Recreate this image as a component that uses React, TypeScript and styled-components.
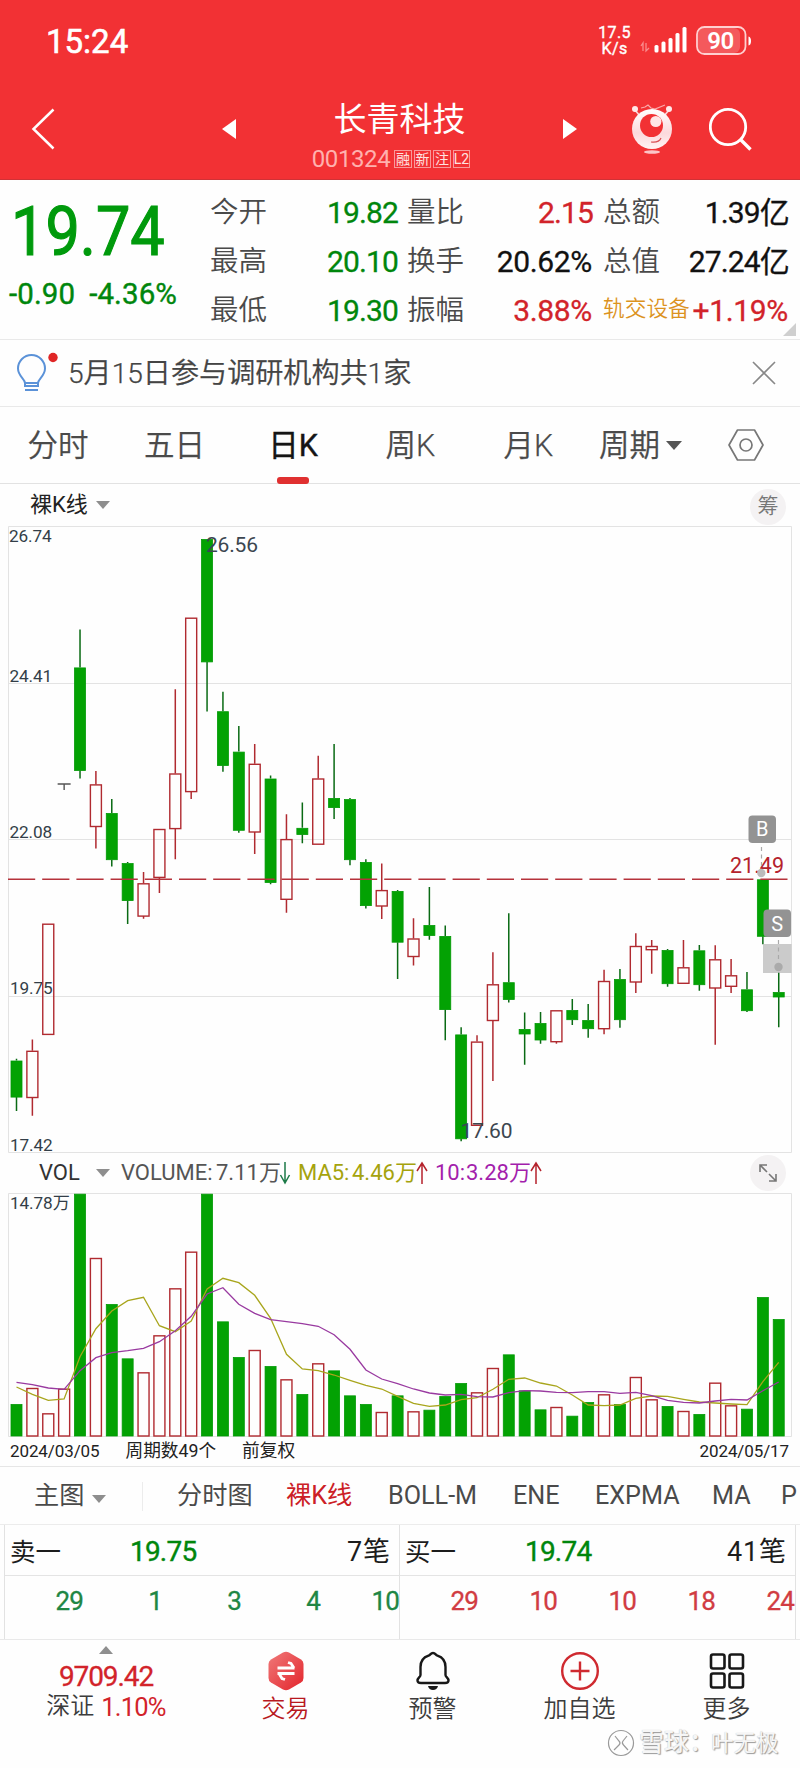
import React from "react";
import styled, { createGlobalStyle } from "styled-components";

const GREEN = "#00860c";
const BAR_GREEN = "#03a203";
const RED = "#d2232a";
const BAR_RED = "#b02a30";

const Global = createGlobalStyle`
  * { box-sizing: border-box; }
  body {
    margin: 0;
    background: #fdfdfd;
    font-family: Roboto, "Noto Sans CJK SC", sans-serif;
    line-height: 1.2;
    color: #444;
  }
  svg { display: block; }
`;

const Screen = styled.div`
  width: 800px;
  height: 1768px;
  overflow: hidden;
  background: #fefefe;
  display: flex;
  flex-direction: column;
`;

/* ---------- status bar and header ---------- */

const StatusBar = styled.div`
  height: 84px;
  padding: 0 48px 1px 46px;
  background: #f23134;
  color: #fff;
  display: flex;
  align-items: center;
  justify-content: space-between;
`;
const Clock = styled.span`
  font-size: 33px;
  -webkit-text-stroke: 0.6px currentColor;
`;
const StatusRight = styled.div`
  display: flex;
  align-items: center;
  padding-bottom: 2px;
`;
const NetSpeed = styled.div`
  font-size: 16px;
  letter-spacing: 0.4px;
  -webkit-text-stroke: 0.4px currentColor;
  text-align: center;
  margin: 0 9px 0 0;
`;
const NetLine = styled.div`
  height: 16px;
  line-height: 16px;
`;

const Header = styled.header`
  height: 96px;
  background: #f23134;
  border-bottom: 1px solid #cf3236;
  color: #fff;
  display: grid;
  grid-template-columns: 221px 16px 326px 16px 52px 42px 36px 44px 47px;
  align-items: start;
`;
const IconSlot = styled.div<{ $top: number; $left?: number }>`
  padding: ${(p) => p.$top}px 0 0 ${(p) => p.$left ?? 0}px;
`;
const TitleBlock = styled.div`
  display: flex;
  flex-direction: column;
  align-items: center;
  padding: 14px 1px 0 0;
`;
const StockName = styled.div`
  font-size: 33px;
  line-height: 44px;
  height: 44px;
`;
const CodeLine = styled.div`
  display: flex;
  align-items: center;
  gap: 2px;
  height: 34px;
  margin-left: -17px;
`;
const Code = styled.span`
  font-size: 24px;
  color: #ffb1ae;
  letter-spacing: -0.4px;
  margin-right: 2px;
`;
const Badge = styled.span`
  width: 17.5px;
  height: 18px;
  border: 1px solid #f9999a;
  font-size: 14px;
  line-height: 16px;
  display: flex;
  justify-content: center;
  color: #ffe3e1;
`;

/* ---------- quote ---------- */

const Quote = styled.section`
  height: 160px;
  border-bottom: 1px solid #e9e9e9;
  display: grid;
  grid-template-columns: 210px 187px 10px 185px 11px 185px 1fr;
  position: relative;
`;
const PriceBlock = styled.div`
  color: ${GREEN};
  white-space: nowrap;
`;
const Price = styled.div`
  width: max-content;
  margin-left: 11px;
  padding-top: 6px;
  font-size: 68px;
  line-height: 92px;
  height: 92px;
  color: #009a0c;
  -webkit-text-stroke: 1.2px currentColor;
  transform: scaleX(0.9);
  transform-origin: left;
`;
const Change = styled.div`
  display: flex;
  gap: 14px;
  padding-left: 9px;
  font-size: 29.5px;
  line-height: 45px;
  letter-spacing: 0.1px;
  -webkit-text-stroke: 0.4px currentColor;
`;
const Metrics = styled.div`
  display: flex;
  flex-direction: column;
  padding-top: 8px;
`;
const Metric = styled.div`
  height: 49px;
  display: flex;
  justify-content: space-between;
  align-items: center;
  white-space: nowrap;
`;
const Label = styled.span<{ $small?: boolean }>`
  font-size: ${(p) => (p.$small ? 21.7 : 28.5)}px;
  line-height: 36px;
  height: ${(p) => (p.$small ? 39 : 36)}px;
  color: ${(p) => (p.$small ? "#dc931f" : "#4a4a4a")};
  font-weight: 350;
`;
const Value = styled.span<{ $color: string; $wide: boolean }>`
  font-size: 30px;
  color: ${(p) => p.$color};
  letter-spacing: ${(p) => (p.$wide ? -0.35 : -0.85)}px;
  margin-right: ${(p) => (p.$wide ? 0 : -1)}px;
  -webkit-text-stroke: 0.3px currentColor;
`;
const Corner = styled.div`
  position: absolute;
  right: 4px;
  bottom: 3px;
  border-left: 13px solid transparent;
  border-bottom: 13px solid #cfcfcf;
`;

/* ---------- tip ---------- */

const Tip = styled.section`
  height: 67px;
  border-bottom: 1px solid #e9e9e9;
  padding: 0 24px 0 16px;
  display: flex;
  align-items: center;
`;
const TipText = styled.span`
  flex: 1;
  padding: 1px 0 0 9px;
  font-size: 28.1px;
  font-weight: 350;
  color: #444;
  -webkit-text-stroke: 0.25px currentColor;
`;

/* ---------- period tabs ---------- */

const Tabs = styled.nav`
  height: 77px;
  border-bottom: 1px solid #e2e2e2;
  display: grid;
  grid-template-columns: 116px 117px 120px 115px 121px 103px 108px;
  justify-items: center;
`;
const Tab = styled.div<{ $active?: boolean }>`
  font-size: 30.5px;
  line-height: 76px;
  height: 77px;
  color: ${(p) => (p.$active ? "#151515" : "#4a4a4a")};
  font-weight: ${(p) => (p.$active ? 400 : 350)};
  -webkit-text-stroke: ${(p) => (p.$active ? 0.4 : 0.25)}px currentColor;
  position: relative;
  display: flex;
  align-items: center;
  gap: 6px;
  &::after {
    content: "";
    display: ${(p) => (p.$active ? "block" : "none")};
    position: absolute;
    left: calc(50% - 16px);
    bottom: 0;
    width: 32px;
    height: 7px;
    border-radius: 3px;
    background: #e03030;
  }
`;

const Down = styled.i<{ $w: number; $c?: string; $drop?: number }>`
  display: block;
  margin-top: ${(p) => p.$drop ?? 0}px;
  border: ${(p) => p.$w / 2}px solid transparent;
  border-bottom: 0;
  border-top: ${(p) => p.$w / 2 + 1}px solid ${(p) => p.$c ?? "#8e8e8e"};
`;

/* ---------- charts ---------- */

const ChartHead = styled.div`
  height: 42px;
  padding: 3px 14px 0 30px;
  display: flex;
  align-items: center;
  justify-content: space-between;
`;
const ChartName = styled.div`
  display: flex;
  align-items: center;
  gap: 8px;
  font-size: 22px;
  color: #222;
  padding-bottom: 2px;
`;
const RoundButton = styled.div`
  width: 36px;
  height: 36px;
  border-radius: 50%;
  background: #f4f2f3;
  color: #777;
  font-size: 21px;
  font-weight: 350;
  display: flex;
  align-items: center;
  justify-content: center;
`;
const Plot = styled.svg`
  font-family: Roboto, "Noto Sans CJK SC", sans-serif;
  flex: none;
  overflow: visible;
`;
const VolHead = styled.div`
  height: 40px;
  padding: 0 14px 0 39px;
  display: flex;
  align-items: center;
  font-size: 22px;
  white-space: nowrap;
`;
const VolLabel = styled.span<{ $w: number; $color?: string }>`
  width: ${(p) => p.$w}px;
  color: ${(p) => p.$color ?? "inherit"};
  display: flex;
  align-items: center;
`;
const Spacer = styled.div`
  flex: 1;
`;
const Dates = styled.div`
  height: 30px;
  padding: 0 11px 0 10px;
  border-bottom: 1px solid #e6e6e6;
  display: flex;
  align-items: center;
  font-size: 17px;
  color: #222;
  gap: 26px;
`;
const DateText = styled.span`
  letter-spacing: -0.1px;
`;
const Note = styled.span`
  font-size: 17.7px;
`;

/* ---------- indicator tabs ---------- */

const Indicators = styled.nav`
  height: 58px;
  border-bottom: 1px solid #ececec;
  padding: 1px 0 0 34px;
  display: grid;
  grid-template-columns: 108px 35px 109px 102px 125px 82px 117px 69px 1fr;
  align-items: center;
  font-size: 25.2px;
  white-space: nowrap;
`;
const Indicator = styled.div<{ $active?: boolean }>`
  color: ${(p) => (p.$active ? "#cc2026" : "#4a4a4a")};
  display: flex;
  align-items: center;
  gap: 8px;
`;
const Divider = styled.div`
  width: 1px;
  height: 29px;
  background: #ececec;
`;

/* ---------- order queues ---------- */

const Orders = styled.section`
  height: 114px;
  margin: 0 4px;
  border-left: 1px solid #e2e2e2;
  display: grid;
  grid-template-columns: 395px 1fr;
`;
const Side = styled.div`
  border-right: 1px solid #e2e2e2;
`;
const Best = styled.div`
  height: 51px;
  border-bottom: 1px solid #e4e4e4;
  padding: 4px 9px 0 5px;
  display: grid;
  grid-template-columns: 120px 1fr auto;
  align-items: center;
  font-size: 25.5px;
  color: #1c1c1c;
`;
const BestPrice = styled.span`
  font-size: 28px;
  letter-spacing: -0.8px;
  color: ${GREEN};
  -webkit-text-stroke: 0.4px currentColor;
`;
const Count = styled.span`
  font-size: 27px;
  letter-spacing: 0.9px;
  margin-right: -1px;
`;
const Queue = styled.div<{ $color: string }>`
  display: grid;
  grid-template-columns: repeat(5, 79px);
  margin-left: -1px;
  text-align: right;
  font-size: 26px;
  line-height: 51px;
  letter-spacing: -0.9px;
  color: ${(p) => p.$color};
  -webkit-text-stroke: 0.3px currentColor;
`;

/* ---------- bottom navigation ---------- */

const Footer = styled.footer`
  height: 129px;
  border-top: 1px solid #e9e9e9;
`;
const Nav = styled.nav`
  height: 85px;
  display: grid;
  grid-template-columns: 212px 147px 147px 147px 147px;
`;
const NavItem = styled.div<{ $color?: string }>`
  display: flex;
  flex-direction: column;
  align-items: center;
  padding-top: 10px;
  font-size: 24px;
  line-height: 32px;
  gap: 1px;
  color: ${(p) => p.$color ?? "#3c3c3c"};
  font-weight: 350;
`;
const IndexItem = styled.div`
  display: flex;
  flex-direction: column;
  align-items: center;
  color: ${RED};
  padding-top: 6px;
`;
const IndexValue = styled.div`
  font-size: 28px;
  line-height: 32px;
  letter-spacing: -1.1px;
  margin-top: 7px;
  -webkit-text-stroke: 0.3px currentColor;
`;
const IndexChange = styled.div`
  font-size: 25.5px;
  line-height: 28px;
  display: flex;
  gap: 7px;
  letter-spacing: -0.8px;
`;
const IndexName = styled.span`
  font-size: 24px;
  color: #3c3c3c;
  font-weight: 350;
  line-height: 26px;
  letter-spacing: 0;
`;
const Up = styled.i`
  border: 7px solid transparent;
  border-top: 0;
  border-bottom: 8px solid #8f8f8f;
`;
const Watermark = styled.div`
  display: flex;
  align-items: center;
  padding: 2px 0 0 607px;
  height: 34px;
  font-size: 22.5px;
  color: #f6f6f6;
  white-space: nowrap;
  text-shadow: 1px 1px 1px #999, 0 0 1px #bbb;
`;
const Brand = styled.b`
  font-size: 25px;
  margin-left: 4px;
  font-weight: 500;
`;
const Author = styled.span`
  margin-left: -3px;
`;

/* ---------- data ---------- */

type Candle = [kind: string, high: number, top: number, bottom: number, low: number];

const candles: Candle[] = [
  ["g", 1058.8, 1060.5, 1097.1, 1111], ["r", 1039.5, 1050.8, 1097.5, 1115.7],
  ["r", 923.7, 923.7, 1034.4, 1034.4], ["t", 784, 784, 784, 789.9],
  ["g", 629.5, 667.4, 770.5, 778.5], ["r", 771, 784.4, 826.5, 848.4],
  ["g", 799.1, 813, 859.7, 866.5], ["g", 861.9, 863.1, 900.6, 924.1],
  ["r", 872, 883.3, 916.1, 918.7], ["r", 829, 829, 877.4, 893],
  ["r", 689.3, 773.5, 828.6, 859.3], ["r", 617.7, 617.7, 791.6, 799.1],
  ["g", 539, 539, 661.9, 711.6], ["g", 691.8, 711.2, 765.5, 771.8],
  ["g", 725.9, 751.6, 830.3, 832.8], ["r", 744, 763.8, 832, 853.9],
  ["g", 775.6, 778.5, 882.5, 884.2], ["r", 814.3, 839.1, 899.3, 912.8],
  ["g", 802.5, 827.8, 834.5, 843.3], ["r", 755.8, 778.5, 844.2, 844.2],
  ["g", 744, 797.9, 807.6, 818.9], ["g", 797.9, 799.1, 859.7, 865.2],
  ["g", 859.3, 861.9, 905.6, 908.6], ["r", 863.5, 890.1, 906, 919.1],
  ["g", 890.1, 890.9, 942.2, 978.9], ["r", 918.2, 938.5, 956.5, 965.4],
  ["g", 887.1, 925, 935.5, 939.7], ["g", 925.4, 935.9, 1009.6, 1040.3],
  ["g", 1027.3, 1034.4, 1138.8, 1141.3], ["r", 1035.3, 1041.6, 1125.3, 1125.3],
  ["r", 952.3, 984.3, 1020.5, 1081.1], ["g", 913.2, 982.2, 999.5, 1002.4],
  ["g", 1012.5, 1028.9, 1034, 1064.7], ["g", 1012, 1023, 1040, 1043.7],
  ["r", 1010.3, 1010.3, 1041.7, 1043.7], ["g", 999, 1010, 1019.7, 1025],
  ["g", 1004, 1020, 1028.7, 1037.7], ["r", 969.7, 981, 1028.7, 1034.3],
  ["g", 969, 979, 1019.7, 1027.7], ["r", 933.3, 946, 982, 993],
  ["r", 940, 946, 949.7, 973.7], ["g", 949, 950, 983.7, 986.7],
  ["r", 940, 967.3, 983.3, 983.3], ["g", 945, 950.3, 984.7, 990.7],
  ["r", 945.3, 959.3, 988, 1044.7], ["r", 959, 975.3, 986.3, 993],
  ["g", 972, 989.3, 1010.7, 1012], ["g", 879.3, 879.3, 936.3, 944.3],
  ["g", 972.3, 992, 997, 1027.3],
];

const volumes = [
  762, 714, 790, 716, 131, 324, 462, 625, 667, 556, 415, 305, 131, 514, 621, 600, 648, 688, 732, 640, 661, 736, 762,
  786, 736, 784, 779, 738, 699, 727, 654, 613, 721, 778, 771, 797, 756, 733, 762, 681, 748, 768, 783, 792, 698, 766,
  776, 441, 507,
];
const ma5 = [
  711, 733, 751, 747, 620, 536, 483, 452, 442, 527, 545, 513, 417, 385, 398, 436, 505, 613, 657, 662, 675, 691, 706,
  717, 739, 760, 769, 765, 749, 743, 718, 688, 684, 699, 708, 735, 765, 767, 765, 745, 738, 739, 748, 756, 759, 762,
  764, 695, 637,
];
const ma10 = [
  697, 704, 714, 718, 662, 623, 608, 602, 595, 575, 542, 499, 432, 413, 463, 490, 509, 515, 521, 529, 554, 598, 660,
  687, 701, 717, 729, 735, 733, 740, 741, 728, 722, 723, 727, 728, 725, 725, 730, 727, 737, 751, 757, 759, 753, 748,
  750, 722, 696,
];

const cx = (i: number) => 16.5 + 15.88 * i;
const line = (v: number[]) => v.map((y, i) => `${cx(i).toFixed(1)},${(y / 3 - 43).toFixed(1)}`).join(" ");

const metrics: [string, string, string][][] = [
  [["今开", "19.82", GREEN], ["最高", "20.10", GREEN], ["最低", "19.30", GREEN]],
  [["量比", "2.15", RED], ["换手", "20.62%", "#111"], ["振幅", "3.88%", RED]],
  [["总额", "1.39亿", "#111"], ["总值", "27.24亿", "#111"], ["轨交设备", "+1.19%", RED]],
];

/* ---------- drawings ---------- */

const PriceChart = () => (
  <Plot width="800" height="627" viewBox="0 526 800 627">
    <path
      d="M8.5 526.5H791.5V1152.5H8.5Z M8 683.5H791 M8 839.5H791 M8 996.5H791"
      stroke="#e3e3e3"
      fill="none"
    />
    <g fill="#333e48" fontSize="17.2" letterSpacing="-0.1">
      <text x="9" y="542">26.74</text>
      <text x="9.5" y="681.500">24.41</text>
      <text x="9.5" y="838">22.08</text>
      <text x="10" y="994">19.75</text>
      <text x="10" y="1150.5">17.42</text>
    </g>
    {candles.map(([kind, high, top, bottom, low], i) => {
      const x = cx(i);
      if (kind === "t")
        return <path key={i} d={`M${x - 6.5} ${top}H${x + 6.5}M${x} ${top}V${low}`} stroke="#555" strokeWidth="1.4" />;
      const up = kind === "r";
      return (
        <g key={i} stroke={up ? BAR_RED : "#0a6a14"} strokeWidth="1.5">
          <path d={`M${x} ${high}V${top}M${x} ${bottom}V${low}`} />
          <rect
            x={x - 5.5}
            y={top + 0.5}
            width={11}
            height={Math.max(bottom - top - 0.5, 2)}
            fill={up ? "none" : BAR_GREEN}
            stroke={up ? BAR_RED : "#029a06"}
            strokeWidth={up ? 1.4 : 0.8}
          />
        </g>
      );
    })}
    <path d="M8 879.3H787.5" stroke="#b5323b" strokeWidth="1.4" strokeDasharray="27.2 7" />
    <g fill="#3c4650" fontSize="21" letterSpacing="-0.2">
      <text x="206" y="552">26.56</text>
      <text x="460.500" y="1138">17.60</text>
    </g>
    <text x="730" y="873.3" fontSize="21.5" fill="#b5222c">21.49</text>
    <rect x="763" y="944" width="28.5" height="29" fill="#b9b9b9" opacity=".75" />
    <path d="M761.5 847V868M778.5 940V962" stroke="#a9a9a9" strokeWidth="1.2" strokeDasharray="4 3.5" />
    <circle cx="761.3" cy="873" r="4.2" fill="#bbb" />
    <circle cx="778.5" cy="967" r="4.2" fill="#aaa" />
    <g fill="#939393">
      <rect x="748.5" y="815.5" width="27.5" height="27.5" rx="4" />
      <rect x="763.5" y="909.5" width="27.5" height="27.5" rx="4" />
    </g>
    <g fill="#fff" fontSize="20" textAnchor="middle">
      <text x="762.3" y="836">B</text>
      <text x="777.2" y="930.5">S</text>
    </g>
  </Plot>
);

const VolumeChart = () => (
  <Plot width="800" height="244" viewBox="0 0 800 244">
    <path d="M8.5 .5H791.5V243.5H8.5Z" fill="none" stroke="#e3e3e3" />
    <text x="10" y="16" fontSize="17.2" fill="#333e48" letterSpacing="-0.1">14.78万</text>
    {volumes.map((v, i) => {
      const y = v / 3 - 43;
      const up = candles[i][0] !== "g";
      return (
        <rect
          key={i}
          x={cx(i) - 5.5}
          y={y + 0.5}
          width={11}
          height={242.5 - y}
          fill={up ? "none" : BAR_GREEN}
          stroke={up ? BAR_RED : "#029a06"}
          strokeWidth={up ? 1.4 : 0.8}
        />
      );
    })}
    <polyline points={line(ma5)} fill="none" stroke="#a8a51c" strokeWidth="1.3" />
    <polyline points={line(ma10)} fill="none" stroke="#993aa0" strokeWidth="1.3" />
  </Plot>
);

const Arrow = ({ down }: { down?: boolean }) => (
  <svg width="14" height="24" viewBox="0 0 14 24" fill="none" stroke={down ? "#1d7a48" : "#b5222c"} strokeWidth="1.5">
    {down ? <path d="M7 1V22M2.500 14L7 22L11.500 14" /> : <path d="M7 23V2M2 10L7 2L12 10" />}
  </svg>
);

const Signal = () => (
  <svg width="56" height="30" viewBox="0 0 56 30" fill="#fff">
    <path d="M3 25V17L1 20M6 17V25L9 22" fill="none" stroke="#f98b8c" strokeWidth="1.3" />
    <rect x="14.5" y="19" width="4" height="7.5" rx="1.5" />
    <rect x="21.5" y="15.5" width="4" height="11" rx="1.5" />
    <rect x="28.5" y="12" width="4" height="14.5" rx="1.5" />
    <rect x="35.5" y="7" width="4" height="19.5" rx="1.5" />
    <rect x="42.5" y="1" width="4" height="25.5" rx="1.5" />
  </svg>
);

const Battery = () => (
  <svg width="56" height="30" viewBox="0 0 56 30">
    <rect x="2" y="2" width="42" height="25" rx="6" fill="#f4595c" />
    <rect x="1" y="1" width="48.5" height="27" rx="7.5" fill="none" stroke="#ffd0d0" strokeWidth="1.8" />
    <path d="M52.5 10.5Q55 11 55 15T52.5 19.5Z" fill="#fff" />
    <text x="24.5" y="23" fontSize="24" fontWeight="600" fill="#fff" textAnchor="middle" letterSpacing="-0.5">90</text>
  </svg>
);

const Mascot = () => (
  <svg width="42" height="52" viewBox="0 0 42 52">
    <defs>
      <linearGradient id="face" x1="0" y1="0" x2="0" y2="1">
        <stop offset="0" stopColor="#fff" />
        <stop offset=".6" stopColor="#fcd9dc" />
        <stop offset="1" stopColor="#fff4f4" />
      </linearGradient>
    </defs>
    <path d="M4 7L9 13M38 7L33 13" stroke="#fbd0d2" strokeWidth="1.8" />
    <circle cx="4" cy="6" r="3" fill="#ffe9e9" />
    <circle cx="38" cy="6" r="3" fill="#ffe9e9" />
    <path d="M10 5L14 4L17 2L20 5L24 6L34 2" stroke="#fba9a9" strokeWidth="1.2" fill="none" />
    <circle cx="21" cy="26" r="20" fill="url(#face)" />
    <circle cx="20.5" cy="22.5" r="11.5" fill="#f23134" />
    <circle cx="24.8" cy="18.5" r="5.6" fill="#ffe6e6" />
    <path d="M20 39Q28 40 30 35" stroke="#d95055" strokeWidth="1.2" fill="none" />
    <ellipse cx="21" cy="49" rx="8" ry="1.8" fill="#fcc5c7" />
  </svg>
);

export default function App() {
  return (
    <Screen>
      <Global />
      <StatusBar>
        <Clock>15:24</Clock>
        <StatusRight>
          <NetSpeed>
            <NetLine>17.5</NetLine>
            <NetLine>K/s</NetLine>
          </NetSpeed>
          <Signal />
          <Battery />
        </StatusRight>
      </StatusBar>
      <Header>
        <IconSlot $top={24} $left={31}>
          <svg width="24" height="42" viewBox="0 0 24 42" fill="none" stroke="#fff" strokeWidth="2.5">
            <path d="M22.5 1.5L2.5 21L22.5 40.5" />
          </svg>
        </IconSlot>
        <IconSlot $top={34}>
          <svg width="16" height="22" fill="#fff"><path d="M1 11L15 1V21Z" /></svg>
        </IconSlot>
        <TitleBlock>
          <StockName>长青科技</StockName>
          <CodeLine>
            <Code>001324</Code>
            <Badge>融</Badge><Badge>新</Badge><Badge>注</Badge><Badge>L2</Badge>
          </CodeLine>
        </TitleBlock>
        <IconSlot $top={34}>
          <svg width="16" height="22" fill="#fff"><path d="M14 11L0 1V21Z" /></svg>
        </IconSlot>
        <span />
        <IconSlot $top={19}><Mascot /></IconSlot>
        <span />
        <IconSlot $top={23}>
          <svg width="44" height="44" viewBox="0 0 44 44" fill="none" stroke="#fff" strokeWidth="2.8">
            <circle cx="19" cy="20" r="17.7" />
            <path d="M31 32L41.5 42.5" strokeWidth="3.4" />
          </svg>
        </IconSlot>
      </Header>

      <Quote>
        <PriceBlock>
          <Price>19.74</Price>
          <Change><span>-0.90</span><span>-4.36%</span></Change>
        </PriceBlock>
        {metrics.map((group, g) => (
          <React.Fragment key={g}>
            {g > 0 && <span />}
            <Metrics>
              {group.map(([label, value, color]) => (
                <Metric key={label}>
                  <Label $small={label.length > 2}>{label}</Label>
                  <Value $color={color} $wide={value.endsWith("%")}>{value}</Value>
                </Metric>
              ))}
            </Metrics>
          </React.Fragment>
        ))}
        <Corner />
      </Quote>

      <Tip>
        <svg width="43" height="44" viewBox="0 0 43 44" fill="none" stroke="#5b92d8" strokeWidth="2">
          <path d="M9 32C9 28 2 25 2 17.5A13.5 13.5 0 0 1 29 17.5C29 25 22 28 22 32Z" />
          <path d="M9 32V35H22V32M9 39H22" />
          <circle cx="37" cy="6.5" r="4.7" fill="#e02626" stroke="none" />
        </svg>
        <TipText>5月15日参与调研机构共1家</TipText>
        <svg width="24" height="24" stroke="#888" strokeWidth="1.6"><path d="M1 1L23 23M23 1L1 23" /></svg>
      </Tip>

      <Tabs>
        <Tab>分时</Tab>
        <Tab>五日</Tab>
        <Tab $active>日K</Tab>
        <Tab>周K</Tab>
        <Tab>月K</Tab>
        <Tab>周期<Down $w={16} $c="#555" /></Tab>
        <IconSlot $top={22}>
          <svg width="36" height="32" viewBox="0 0 36 32" fill="none" stroke="#777" strokeWidth="1.7">
            <path d="M9.5 1H26.5L35 16L26.5 31H9.5L1 16Z" strokeLinejoin="round" />
            <circle cx="18" cy="16" r="6" />
          </svg>
        </IconSlot>
      </Tabs>

      <ChartHead>
        <ChartName>裸K线<Down $w={14} /></ChartName>
        <RoundButton>筹</RoundButton>
      </ChartHead>
      <PriceChart />
      <VolHead>
        <VolLabel $w={57} $color="#333">VOL</VolLabel>
        <VolLabel $w={25}><Down $w={14} /></VolLabel>
        <VolLabel $w={95} $color="#555">VOLUME:</VolLabel>
        <VolLabel $w={62} $color="#555">7.11万</VolLabel>
        <VolLabel $w={20}><Arrow down /></VolLabel>
        <VolLabel $w={54} $color="#a5a30d">MA5:</VolLabel>
        <VolLabel $w={63} $color="#a5a30d">4.46万</VolLabel>
        <VolLabel $w={20}><Arrow /></VolLabel>
        <VolLabel $w={31} $color="#a31eac">10:</VolLabel>
        <VolLabel $w={63} $color="#a31eac">3.28万</VolLabel>
        <VolLabel $w={20}><Arrow /></VolLabel>
        <Spacer />
        <RoundButton>
          <svg width="20" height="20" fill="none" stroke="#777" strokeWidth="1.6">
            <path d="M2 9V2H9M2 2L9 9M18 11V18H11M18 18L11 11" />
          </svg>
        </RoundButton>
      </VolHead>
      <VolumeChart />
      <Dates>
        <DateText>2024/03/05</DateText>
        <Note>周期数49个</Note>
        <Note>前复权</Note>
        <Spacer />
        <DateText>2024/05/17</DateText>
      </Dates>

      <Indicators>
        <Indicator>主图<Down $w={15} $drop={7} /></Indicator>
        <Divider />
        <Indicator>分时图</Indicator>
        <Indicator $active>裸K线</Indicator>
        <Indicator>BOLL-M</Indicator>
        <Indicator>ENE</Indicator>
        <Indicator>EXPMA</Indicator>
        <Indicator>MA</Indicator>
        <Indicator>P</Indicator>
      </Indicators>

      <Orders>
        <Side>
          <Best><span>卖一</span><BestPrice>19.75</BestPrice><Count>7笔</Count></Best>
          <Queue $color="#208644">
            {[29, 1, 3, 4, 10].map((n, i) => <span key={i}>{n}</span>)}
          </Queue>
        </Side>
        <Side>
          <Best><span>买一</span><BestPrice>19.74</BestPrice><Count>41笔</Count></Best>
          <Queue $color="#d13c42">
            {[29, 10, 10, 18, 24].map((n, i) => <span key={i}>{n}</span>)}
          </Queue>
        </Side>
      </Orders>

      <Footer>
        <Nav>
          <IndexItem>
            <Up />
            <IndexValue>9709.42</IndexValue>
            <IndexChange><IndexName>深证</IndexName>1.10%</IndexChange>
          </IndexItem>
          <NavItem $color="#b8191f">
            <svg width="40" height="42" viewBox="0 0 40 42">
              <defs>
                <linearGradient id="hex" x1="0" y1="0" x2="1" y2="1">
                  <stop offset="0" stopColor="#f07a7a" />
                  <stop offset="1" stopColor="#e3242b" />
                </linearGradient>
              </defs>
              <path
                d="M17 2.5Q20 1 23 2.5L35 9.5Q37.5 11 37.5 14V28Q37.5 31 35 32.5L23 39.5Q20 41 17 39.5L5 32.5Q2.5 31 2.5 28V14Q2.5 11 5 9.5Z"
                fill="url(#hex)"
              />
              <path
                d="M11.5 18H28.5M22 12.5L25 13.5L28 18M11.5 23.5H28.5M13 23.5L16 28.5L19 29.5"
                stroke="#fff"
                strokeWidth="2.8"
                fill="none"
              />
            </svg>
            交易
          </NavItem>
          <NavItem>
            <svg width="40" height="42" viewBox="0 0 40 42" fill="none" stroke="#181818" strokeWidth="2.4">
              <path d="M20 3C17.5 3 17.5 5 15.5 5.7C10 7.5 7.5 12 7.5 17V25C7.5 27 4.5 28 4.5 30.5C4.5 32.5 6 33 8 33H32C34 33 35.5 32.5 35.5 30.5C35.5 28 32.5 27 32.5 25V17C32.5 12 30 7.5 24.5 5.7C22.5 5 22.5 3 20 3Z" />
              <path d="M15 36H25Q24 40 20 40T15 36Z" fill="#181818" stroke="none" />
            </svg>
            预警
          </NavItem>
          <NavItem>
            <svg width="40" height="42" viewBox="0 0 40 42" fill="none" stroke="#cf2a30" strokeWidth="2.4">
              <circle cx="20" cy="21" r="17.8" />
              <path d="M20 11.5V30.5M10.5 21H29.5" />
            </svg>
            加自选
          </NavItem>
          <NavItem>
            <svg width="40" height="42" viewBox="0 0 40 42" fill="none" stroke="#181818" strokeWidth="2.6">
              <rect x="4" y="4.5" width="13.5" height="14" rx="2" />
              <rect x="22.5" y="4.5" width="13.5" height="14" rx="2" />
              <rect x="4" y="23.5" width="13.5" height="14" rx="2" />
              <rect x="22.5" y="23.5" width="13.5" height="14" rx="2" />
            </svg>
            更多
          </NavItem>
        </Nav>
        <Watermark>
          <svg width="28" height="28" viewBox="0 0 28 28" fill="none" stroke="#999" strokeWidth="1.2">
            <circle cx="14" cy="14" r="12.5" />
            <path d="M8 7L12 12Q14 14 12 16L7 21M20 7L16 12Q14.5 14 16.5 16L21 21" />
          </svg>
          <Brand>雪球：</Brand>
          <Author>叶无极</Author>
        </Watermark>
      </Footer>
    </Screen>
  );
}
